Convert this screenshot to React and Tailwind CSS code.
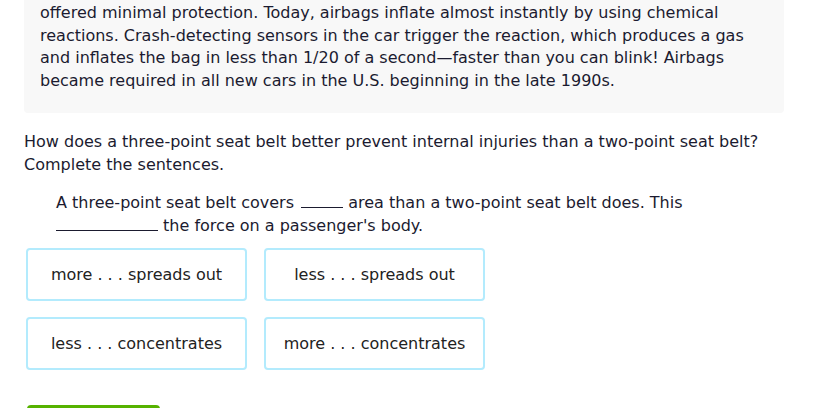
import React from "react";

const choices = [
	"more . . . spreads out",
	"less . . . spreads out",
	"less . . . concentrates",
	"more . . . concentrates",
];

const Blank = ({ w }) => (
	<span className={`inline-block border-b border-[#1b1b2f] align-baseline ${w}`} />
);

export default function App() {
	return (
		<div className="w-[819px] h-[408px] overflow-hidden bg-white font-['DejaVu_Sans',Verdana,sans-serif] text-[16px] text-[#1b1b30]">
			<div className="ml-6 w-[760px] rounded-b bg-[#f8f8f8] pl-4 pr-4 pt-[2px] pb-[21px] leading-[22.5px]">
				offered minimal protection. Today, airbags inflate almost instantly by using chemical
				<br />
				reactions. Crash-detecting sensors in the car trigger the reaction, which produces a gas
				<br />
				and inflates the bag in less than 1/20 of a second—faster than you can blink! Airbags
				<br />
				became required in all new cars in the U.S. beginning in the late 1990s.
			</div>

			<p className="ml-6 mt-[17px] leading-[23px]">
				How does a three-point seat belt better prevent internal injuries than a two-point seat belt?
				<br />
				Complete the sentences.
			</p>

			<p className="ml-14 mt-[15px] leading-[23px]">
				A three-point seat belt covers <Blank w="ml-[2px] w-[42px]" /> area than a two-point seat belt does. This
				<br />
				<Blank w="w-[102px]" /> the force on a passenger's body.
			</p>

			<div className="ml-[26px] mt-[11px] grid w-[459px] grid-cols-2 gap-x-[17px] gap-y-[16px]">
				{choices.map((c) => (
					<button
						key={c}
						className="flex h-[53px] items-center justify-center rounded border-2 border-[#b3ebfd] bg-white text-[16px] text-[#222]"
					>
						{c}
					</button>
				))}
			</div>

			<div className="ml-[27px] mt-[35px] h-[20px] w-[133px] rounded bg-[#56b200]" />
		</div>
	);
}
